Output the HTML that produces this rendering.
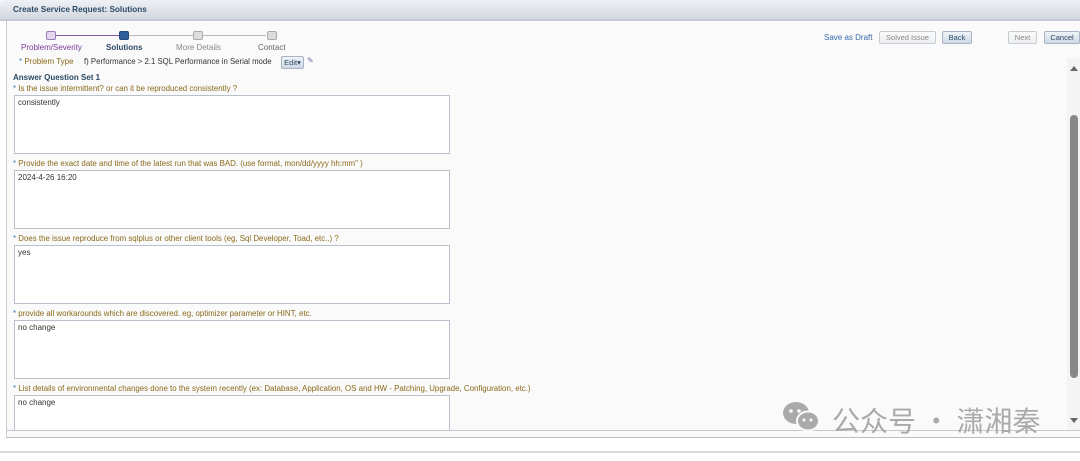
<!DOCTYPE html>
<html><head><style>
*{margin:0;padding:0;box-sizing:border-box}
body{width:1080px;height:461px;overflow:hidden;background:#fff;font-family:"Liberation Sans","Noto Sans CJK SC",sans-serif;position:relative}
.panel{position:absolute;left:6px;top:0;width:1074px;height:438px;background:#fafafa;border-left:1px solid #c8ccd2;border-bottom:1px solid #b8bec6}
.hdr{position:absolute;left:0;top:0;width:1080px;height:21px;background:linear-gradient(#eef1f5,#d3d8df);border-bottom:2px solid #c3cad4;border-radius:3px 0 0 0}
.hdr span{position:absolute;left:13px;top:5px;font-size:8.2px;font-weight:bold;color:#2c4a66}
.a{position:absolute;font-size:8px;white-space:nowrap}
.sq{position:absolute;top:31px;width:10px;height:9px;border:1px solid #aaa;border-radius:2px;background:#ddd}
.ln{position:absolute;top:35px;height:1px;background:#bbb}
.lab{position:absolute;left:13px;font-size:7.9px;color:#8a6a1a;white-space:nowrap}
.lab b{color:#4a78b0;font-weight:normal}
.ta{position:absolute;left:14px;width:436px;background:#fff;border:1px solid #b8c0cc;font-size:8px;color:#333;padding:2px 3px}
.btn{position:absolute;top:31px;height:13px;border:1px solid #c6ccd4;border-radius:2px;font-size:7.5px;color:#888;text-align:center;line-height:11px;background:linear-gradient(#fbfbfb,#eceef0)}
.btn.on{color:#2c4a66;background:linear-gradient(#eef3f8,#cfd9e4);border-color:#a8b4c4}
</style></head><body>
<div class="panel"></div>
<div class="hdr"><span>Create Service Request: Solutions</span></div>
<div class="ln" style="left:55px;width:64px;background:#8a5aa8"></div>
<div class="ln" style="left:129px;width:137px"></div>
<div class="sq" style="left:46px;background:#e4d8f0;border-color:#9a7ab8"></div>
<div class="sq" style="left:119px;background:#2e5e9a;border-color:#234a7a"></div>
<div class="sq" style="left:193px"></div>
<div class="sq" style="left:267px"></div>
<div class="a" style="left:21px;top:43px;color:#7a3a98">Problem/Severity</div>
<div class="a" style="left:106px;top:43px;color:#2c4a66;font-weight:bold">Solutions</div>
<div class="a" style="left:176px;top:43px;color:#888">More Details</div>
<div class="a" style="left:258px;top:43px;color:#666">Contact</div>
<div class="a" style="left:19px;top:57px;color:#8a6a1a"><span style="color:#4a78b0">*</span> Problem Type</div>
<div class="a" style="left:84px;top:57px;color:#333;font-size:7.8px">f) Performance &gt; 2.1 SQL Performance in Serial mode</div>
<div class="btn on" style="left:281px;top:56px;width:23px;color:#2c4a66">Edit▾</div>
<div class="a" style="left:307px;top:56px;color:#7a6aa8">✎</div>
<div class="a" style="left:13px;top:73px;color:#2c4a66;font-weight:bold">Answer Question Set 1</div>
<div class="a" style="left:824px;top:33px;color:#3a6aaa">Save as Draft</div>
<div class="btn" style="left:879px;width:57px">Solved Issue</div>
<div class="btn on" style="left:942px;width:30px">Back</div>
<div class="btn" style="left:1008px;width:29px">Next</div>
<div class="btn on" style="left:1044px;width:36px">Cancel</div>

<div class="lab" style="top:84px"><b>*</b> Is the issue intermittent? or can it be reproduced consistently ?</div>
<div class="ta" style="top:95px;height:59px">consistently</div>
<div class="lab" style="top:159px"><b>*</b> Provide the exact date and time of the latest run that was BAD. (use format, mon/dd/yyyy hh:mm" )</div>
<div class="ta" style="top:170px;height:59px">2024-4-26 16:20</div>
<div class="lab" style="top:234px"><b>*</b> Does the issue reproduce from sqlplus or other client tools (eg, Sql Developer, Toad, etc..) ?</div>
<div class="ta" style="top:245px;height:59px">yes</div>
<div class="lab" style="top:309px"><b>*</b> provide all workarounds which are discovered. eg, optimizer parameter or HINT, etc.</div>
<div class="ta" style="top:320px;height:59px">no change</div>
<div class="lab" style="top:384px"><b>*</b> List details of environmental changes done to the system recently (ex: Database, Application, OS and HW - Patching, Upgrade, Configuration, etc.)</div>
<div class="ta" style="top:395px;height:36px;border-bottom:none">no change</div>

<div style="position:absolute;left:1067px;top:58px;width:13px;height:372px;background:#f4f4f4"></div>
<div style="position:absolute;left:1070px;top:66px;width:0;height:0;border-left:4px solid transparent;border-right:4px solid transparent;border-bottom:5px solid #666"></div>
<div style="position:absolute;left:1070px;top:115px;width:8px;height:263px;background:#888;border-radius:4px"></div>
<div style="position:absolute;left:1070px;top:418px;width:0;height:0;border-left:4px solid transparent;border-right:4px solid transparent;border-top:5px solid #666"></div>

<div style="position:absolute;left:6px;top:430px;width:1074px;height:1px;background:#c4c8d0"></div>
<div style="position:absolute;left:0;top:451px;width:1080px;height:2px;background:#d8dbe0"></div>

<svg style="position:absolute;left:782px;top:400px" width="42" height="34" viewBox="0 0 42 34">
<ellipse cx="14" cy="13" rx="13" ry="11" fill="#aaa"/>
<ellipse cx="26" cy="21" rx="11" ry="9.5" fill="#aaa" stroke="#fafafa" stroke-width="2"/>
<circle cx="9" cy="11" r="1.8" fill="#fafafa"/><circle cx="17" cy="11" r="1.8" fill="#fafafa"/>
<circle cx="22" cy="20" r="1.5" fill="#fafafa"/><circle cx="29" cy="20" r="1.5" fill="#fafafa"/>
</svg>
<div class="a" style="left:832px;top:400px;font-size:28px;color:#aaa;font-family:'Noto Sans CJK SC',sans-serif">公众号 · 潇湘秦</div>
</body></html>
